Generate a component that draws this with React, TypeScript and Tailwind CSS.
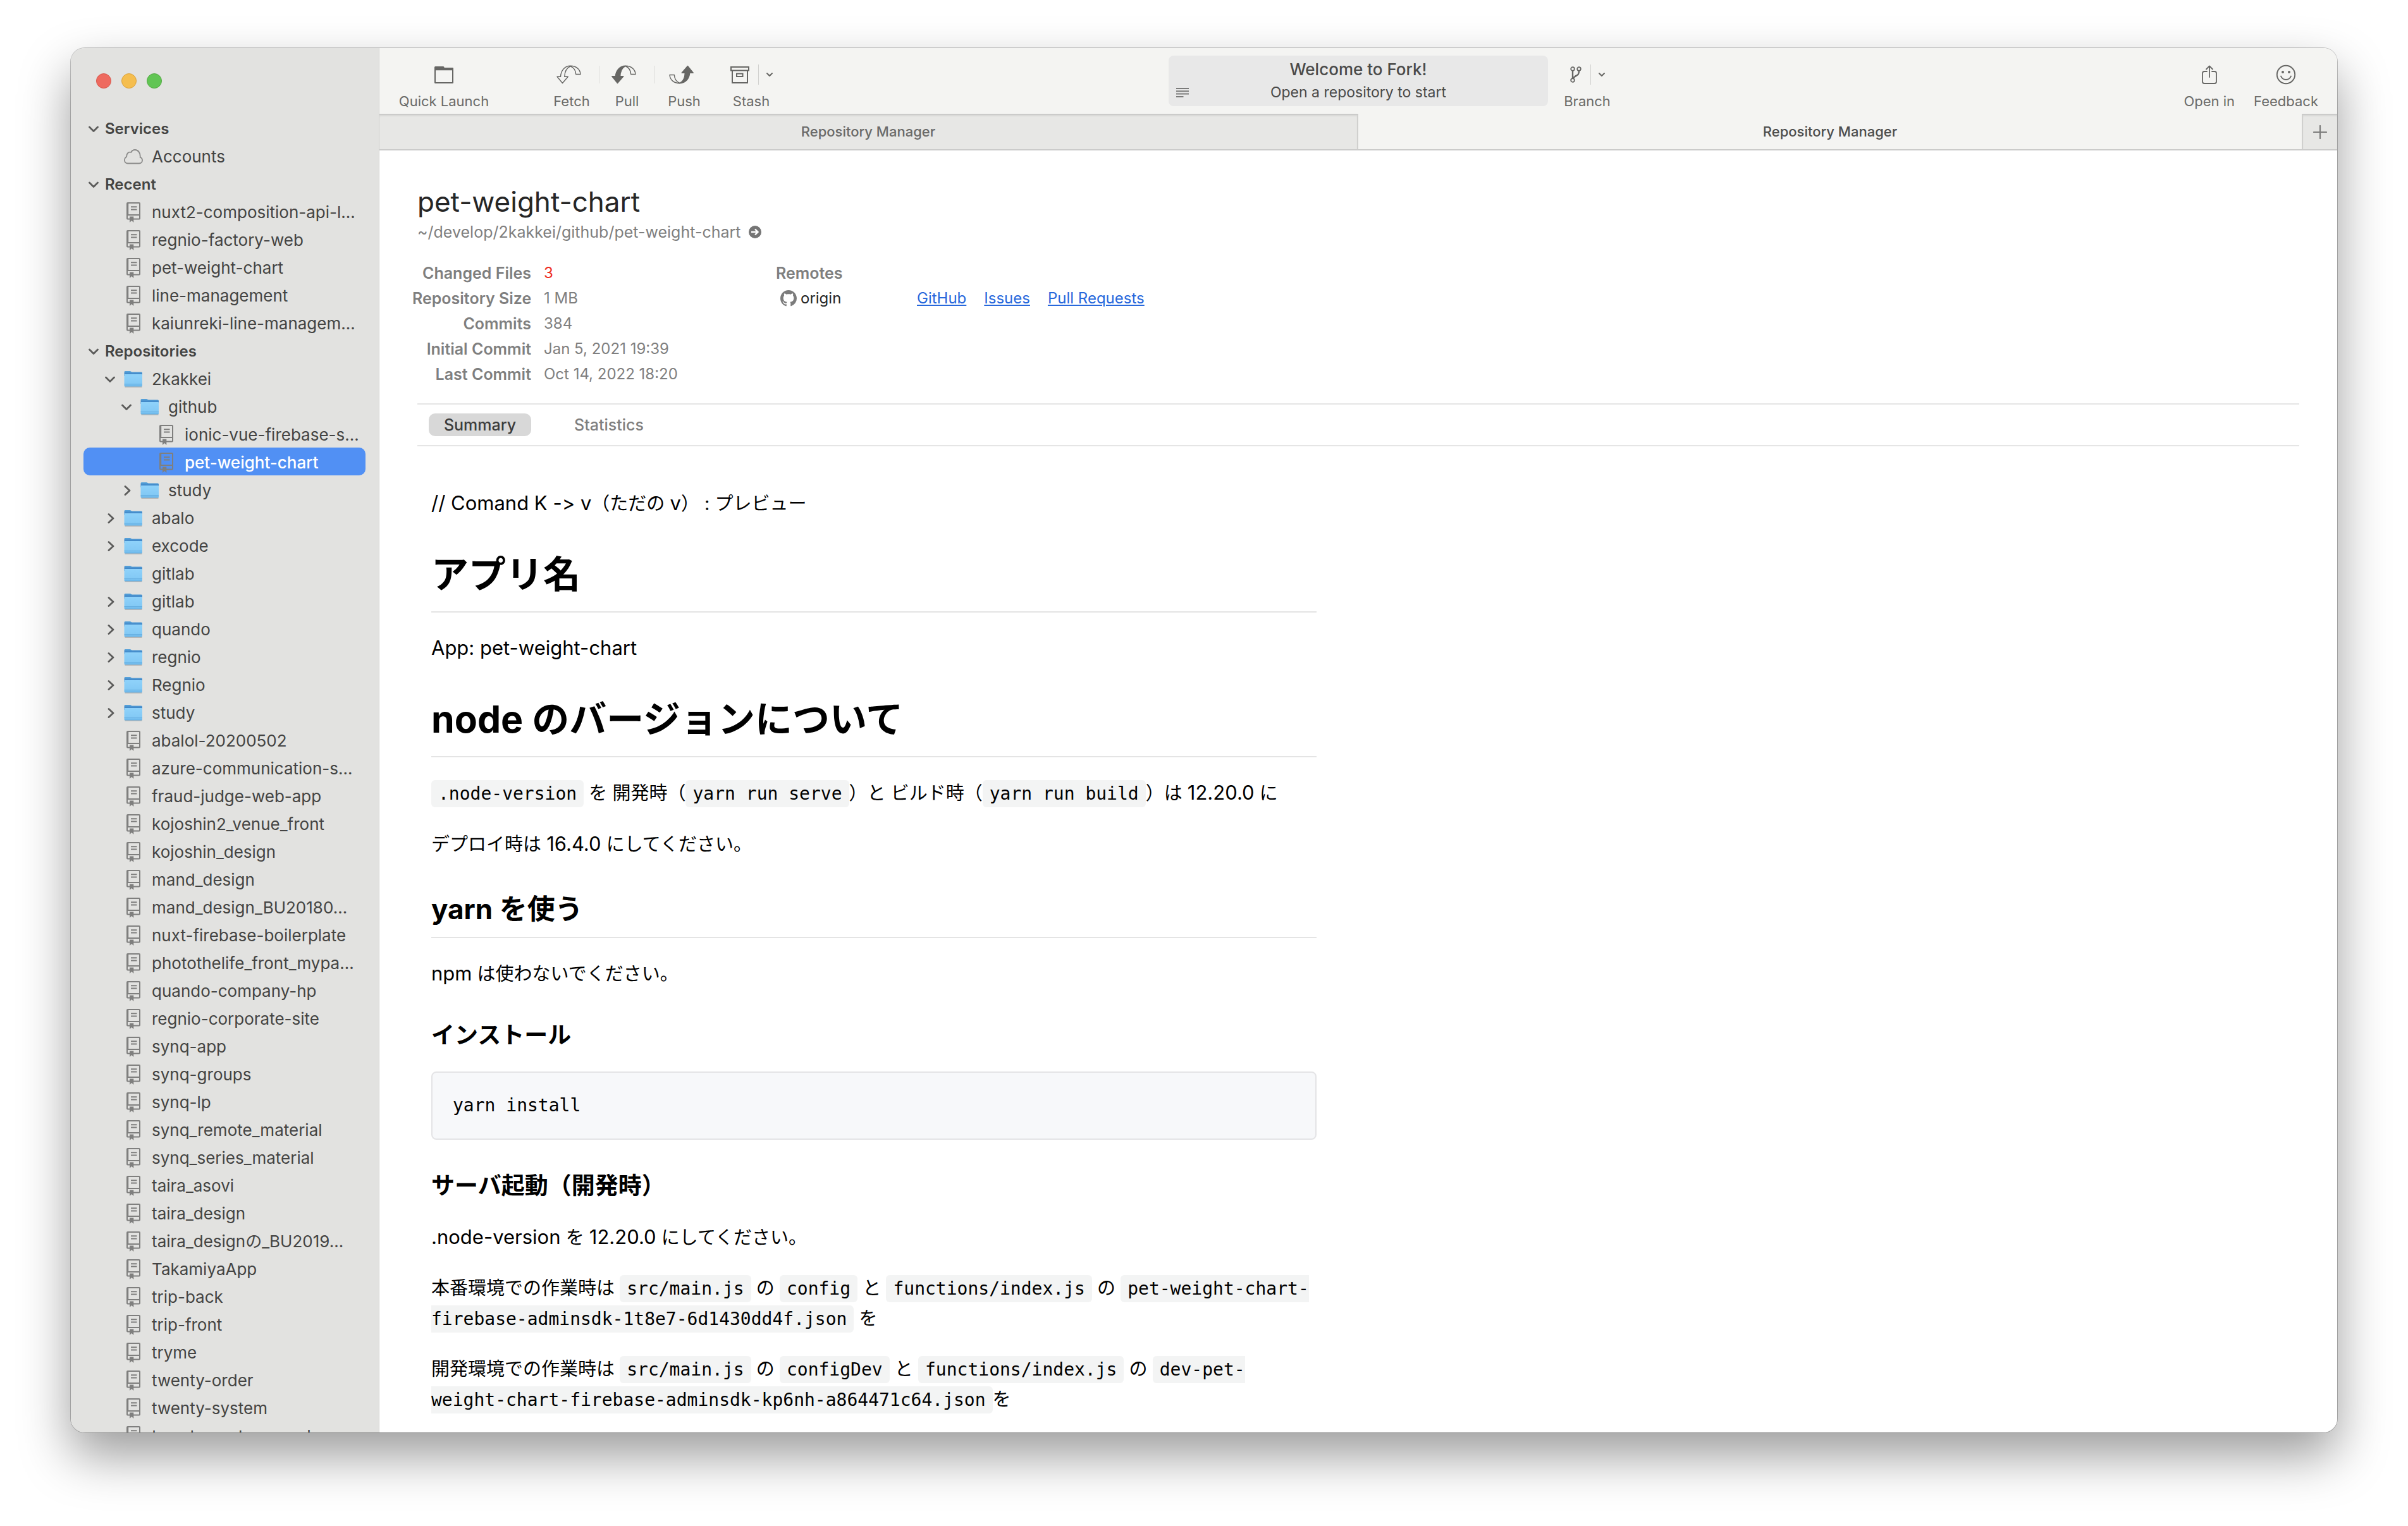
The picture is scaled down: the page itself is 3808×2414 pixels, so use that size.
import { ReactNode } from 'react';
import clsx from 'clsx';

type RowKind = 'section' | 'cloud' | 'folder' | 'repo';

interface Row {
    label: string;
    kind: RowKind;
    level: number;
    open?: boolean;
    selected?: boolean;
}

const section = (label: string): Row => ({ label, kind: 'section', level: 0, open: true });
const folder = (label: string, level = 1, open?: boolean): Row => ({ label, kind: 'folder', level, open });
const repo = (label: string, level = 1, selected = false): Row => ({ label, kind: 'repo', level, selected });

const rows: Row[] = [
    section('Services'),
    { label: 'Accounts', kind: 'cloud', level: 1 },
    section('Recent'),
    repo('nuxt2-composition-api-l…'),
    repo('regnio-factory-web'),
    repo('pet-weight-chart'),
    repo('line-management'),
    repo('kaiunreki-line-managem…'),
    section('Repositories'),
    folder('2kakkei', 1, true),
    folder('github', 2, true),
    repo('ionic-vue-firebase-s…', 3),
    repo('pet-weight-chart', 3, true),
    folder('study', 2, false),
    folder('abalo', 1, false),
    folder('excode', 1, false),
    folder('gitlab'),
    folder('gitlab', 1, false),
    folder('quando', 1, false),
    folder('regnio', 1, false),
    folder('Regnio', 1, false),
    folder('study', 1, false),
    repo('abalol-20200502'),
    repo('azure-communication-s…'),
    repo('fraud-judge-web-app'),
    repo('kojoshin2_venue_front'),
    repo('kojoshin_design'),
    repo('mand_design'),
    repo('mand_design_BU20180…'),
    repo('nuxt-firebase-boilerplate'),
    repo('photothelife_front_mypa…'),
    repo('quando-company-hp'),
    repo('regnio-corporate-site'),
    repo('synq-app'),
    repo('synq-groups'),
    repo('synq-lp'),
    repo('synq_remote_material'),
    repo('synq_series_material'),
    repo('taira_asovi'),
    repo('taira_design'),
    repo('taira_designの_BU2019…'),
    repo('TakamiyaApp'),
    repo('trip-back'),
    repo('trip-front'),
    repo('tryme'),
    repo('twenty-order'),
    repo('twenty-system'),
    repo('twenty-system-prod'),
];

const indents = ['pl-2', 'pl-[34px]', 'pl-[60px]', 'pl-[86px]'];

const stats = [
    { label: 'Changed Files', value: '3', alert: true },
    { label: 'Repository Size', value: '1 MB' },
    { label: 'Commits', value: '384' },
    { label: 'Initial Commit', value: 'Jan 5, 2021 19:39' },
    { label: 'Last Commit', value: 'Oct 14, 2022 18:20' },
];

/* ---------- icons ---------- */

const Disclosure = ({ open }: { open: boolean }) => (
    <svg viewBox="0 0 16 16" className="size-4 shrink-0" fill="none" stroke="#5c5c5b" strokeWidth="2.8" strokeLinecap="round" strokeLinejoin="round">
        <path d={open ? 'M1.5 5 8 11.5 14.5 5' : 'M6 1.5 13 8 6 14.5'} />
    </svg>
);

const FolderIcon = () => (
    <svg viewBox="0 0 30 26" className="h-[26px] w-[30px]">
        <defs>
            <linearGradient id="folder-front" x1="0" y1="0" x2="0" y2="1">
                <stop offset="0" stopColor="#8fd2fa" />
                <stop offset="0.75" stopColor="#83c9f5" />
                <stop offset="1" stopColor="#66b2e6" />
            </linearGradient>
            <linearGradient id="folder-back" x1="0" y1="0" x2="0" y2="1">
                <stop offset="0" stopColor="#5aa5dc" />
                <stop offset="1" stopColor="#2d72b8" />
            </linearGradient>
        </defs>
        <path d="M1.5 25h27" stroke="#00000040" strokeWidth="1.5" />
        <path d="M.5 1.5Q.5 0 2 0h7.5q1 0 1.7.8t1.8.8H27.500q1.500 0 1.500 1.500V8H.5z" fill="url(#folder-back)" />
        <path d="M.5 6q0-1 1-1h26.500q1 0 1 1v17q0 1.500-1.500 1.500H2Q.5 24.500.5 23z" fill="url(#folder-front)" />
        <path d="M.5 20.500H29" stroke="#5fa9dc" strokeWidth="0.8" />
    </svg>
);

const RepoIcon = () => (
    <svg viewBox="0 0 22 32" className="h-8 w-[22px]" fill="none" stroke="#7f7f7e" strokeWidth="2">
        <rect x="1" y="1" width="20" height="25.5" rx="1" />
        <path d="M2.2 1v19M1 20h20M7 7.2h9.5M7 11.5h9.5" />
        <path d="M5 22.5h6.300V32L8.100 29 5 32z" fill="#7f7f7e" stroke="none" />
    </svg>
);

const CloudIcon = () => (
    <svg viewBox="0 0 30 24" className="h-6 w-[30px]" fill="none" stroke="#8b8b8a" strokeWidth="1.8">
        <path d="M6 22.5h18c3 0 5-2.2 5-4.9 0-2.3-1.3-4.1-3.3-4.7C26.3 6 22.5 1 17.5 1c-3 0-5 1.300-6.300 4C7.500 3.800 4 6.500 4.200 11.800 2.200 13 1 15 1 17.500c0 2.900 2.100 5 5 5z" />
    </svg>
);

const GitHubMark = () => (
    <svg viewBox="0 0 16 16" className="size-[26px]" fill="#7c7c7c">
        <path d="M8 0C3.58 0 0 3.58 0 8c0 3.54 2.29 6.53 5.47 7.59.4.07.55-.17.55-.38 0-.19-.01-.82-.01-1.49-2.01.37-2.53-.49-2.69-.94-.09-.23-.48-.94-.82-1.13-.28-.15-.68-.52-.01-.53.63-.01 1.08.58 1.23.82.72 1.21 1.87.87 2.33.66.07-.52.28-.87.51-1.07-1.78-.2-3.64-.89-3.64-3.95 0-.87.31-1.59.82-2.15-.08-.2-.36-1.02.08-2.12 0 0 .67-.21 2.2.82.64-.18 1.32-.27 2-.27.68 0 1.36.09 2 .27 1.53-1.04 2.2-.82 2.2-.82.44 1.1.16 1.92.08 2.12.51.56.82 1.27.82 2.15 0 3.07-1.87 3.75-3.65 3.95.29.25.54.73.54 1.48 0 1.07-.01 1.93-.01 2.2 0 .21.15.46.55.38A8.01 8.01 0 0 0 16 8c0-4.42-3.58-8-8-8z" />
    </svg>
);

const QuickLaunchIcon = () => (
    <svg viewBox="0 0 30 27" className="h-[27px] w-[30px]" fill="#666664">
        <path d="M1.5 0H14q1.3 0 1.7 2h13q1.3 0 1.3 1.3v22.400q0 1.300-1.300 1.300H1.500Q0 27 0 25.500v-24Q0 0 1.500 0zM2 6.300V25h26V6.300z" fillRule="evenodd" />
    </svg>
);

const FetchIcon = () => (
    <svg viewBox="0 0 39 30" className="mr-2.5 h-[30px] w-[39px]" fill="none" stroke="#666664" strokeWidth="1.4" strokeLinejoin="round">
        <path d="M9.5 28.5 1 18.3h5.5C7 8 13.5 1.3 22 1.3 31 1.3 37.5 6.5 38 14.5h-7.300C30.300 8.500 27 3.500 22 1.800 15.800 4.500 13 10.500 12.700 18.300h5.600z" />
    </svg>
);

const PullIcon = ({ className }: { className?: string }) => (
    <svg viewBox="0 0 39 30" className={clsx('mr-2.5 h-[30px] w-[39px]', className)} fill="none" stroke="#666664" strokeWidth="1.4" strokeLinejoin="round">
        <path d="M22 1.3C31 1.3 37.5 6.5 38 14.5h-7.3C30.3 8.5 27 3.5 22 1.5" />
        <path d="M9.5 28.5.8 17.8h5.5C7 8 13.5 1.3 22 1.3 16.5 4.5 13.8 10 13.7 17.8h5.100z" fill="#666664" />
    </svg>
);

const StashIcon = () => (
    <svg viewBox="0 0 30 27" className="h-[27px] w-[30px]" fill="none" stroke="#666664" strokeWidth="2">
        <path d="M1 1h28v5.500H1zM3 6.500V26h24V6.500M10 11.500h9.500v4.500H10z" />
    </svg>
);

const BranchIcon = () => (
    <svg viewBox="0 0 18 26" className="h-[26px] w-[18px]" fill="none" stroke="#666664" strokeWidth="1.8">
        <circle cx="4" cy="4" r="2.8" />
        <circle cx="14" cy="4" r="2.8" />
        <circle cx="4" cy="22" r="2.8" />
        <path d="M4 7v12M14 7c0 7-3 6.5-6.5 9.2Q5 18 4.3 19" strokeWidth="2.4" />
    </svg>
);

const ShareIcon = () => (
    <svg viewBox="0 0 24 30" className="h-[30px] w-6" fill="none" stroke="#666664" strokeWidth="1.8" strokeLinecap="round" strokeLinejoin="round">
        <path d="M8 10H4Q1 10 1 13v13q0 3 3 3h16q3 0 3-3V13q0-3-3-3h-4M12 19V2M7 6.5 12 1.5l5 5" />
    </svg>
);

const SmileIcon = () => (
    <svg viewBox="0 0 32 32" className="size-8" fill="none" stroke="#666664" strokeWidth="1.9" strokeLinecap="round">
        <circle cx="16" cy="16" r="14.2" />
        <path d="M8 18.5C9.5 22 12.5 24 16 24s6.500-2 8-5.500" />
        <circle cx="11" cy="12" r="2" fill="#666664" stroke="none" />
        <circle cx="21" cy="12" r="2" fill="#666664" stroke="none" />
    </svg>
);

const MenuCaret = () => (
    <svg viewBox="0 0 10 8" className="h-2 w-2.5" fill="none" stroke="#666664" strokeWidth="2" strokeLinecap="round" strokeLinejoin="round">
        <path d="M1 2l4 4 4-4" />
    </svg>
);

/* ---------- sidebar ---------- */

const SidebarRow = ({ row }: { row: Row }) => (
    <li>
        <button
            type="button"
            className={clsx(
                'flex h-11 w-full items-center rounded-[10px] pt-[3px] text-left whitespace-nowrap',
                indents[row.level],
                row.kind === 'section' ? 'text-[24px] font-semibold' : 'text-[26px]',
                row.selected ? 'bg-[#5190f4] font-medium text-white' : 'text-[#444443]',
            )}
        >
            {row.open === undefined ? <span className="w-4 shrink-0" /> : <Disclosure open={row.open} />}
            {row.kind === 'section' ? (
                <span className="pl-2.5">{row.label}</span>
            ) : (
                <>
                    <span className="mr-3.5 ml-3.5 flex w-[30px] shrink-0 justify-center">
                        {row.kind === 'folder' && <FolderIcon />}
                        {row.kind === 'repo' && <RepoIcon />}
                        {row.kind === 'cloud' && <CloudIcon />}
                    </span>
                    {row.label}
                </>
            )}
        </button>
    </li>
);

const Sidebar = () => (
    <aside className="flex w-[488px] shrink-0 flex-col overflow-hidden border-r border-[#d3d3d1] bg-[#e2e2e0]">
        <div className="flex h-[104px] shrink-0 items-center gap-4 pl-10">
            <button type="button" aria-label="Close" className="size-6 rounded-full border border-[#d8574b] bg-[#ee6a5f]" />
            <button type="button" aria-label="Minimize" className="size-6 rounded-full border border-[#dba23c] bg-[#f5be4f]" />
            <button type="button" aria-label="Zoom" className="size-6 rounded-full border border-[#52a842] bg-[#61c554]" />
        </div>
        <ul className="min-h-0 flex-1 overflow-hidden pr-[21px] pl-5">
            {rows.map((row, i) => <SidebarRow key={i} row={row} />)}
        </ul>
    </aside>
);

/* ---------- toolbar ---------- */

interface ToolProps {
    label: string;
    className?: string;
    menu?: boolean;
    children: ReactNode;
}

const Tool = ({ label, className, menu, children }: ToolProps) => (
    <button type="button" className={clsx('flex flex-col items-center text-[22px] leading-7 text-[#6b6b69]', className)}>
        <span className="mb-3 flex h-8 items-center">
            {children}
            {menu && (
                <>
                    <span className="mr-3 ml-3.5 h-8 w-px bg-[#d2d2d0]" />
                    <MenuCaret />
                </>
            )}
        </span>
        {label}
    </button>
);

const ToolDivider = () => <span className="mt-0.5 h-7 w-px bg-[#dededc]" />;

const Toolbar = () => (
    <header className="grid h-[104px] shrink-0 grid-cols-[1fr_600px_1fr] bg-[#f4f4f2]">
        <div className="flex items-start pt-[26px]">
            <Tool label="Quick Launch" className="mr-[57px] w-[204px]"><QuickLaunchIcon /></Tool>
            <Tool label="Fetch" className="w-[86px]"><FetchIcon /></Tool>
            <ToolDivider />
            <Tool label="Pull" className="w-[87px]"><PullIcon /></Tool>
            <ToolDivider />
            <Tool label="Push" className="w-[92px]"><PullIcon className="rotate-180" /></Tool>
            <Tool label="Stash" menu className="ml-5 w-20"><StashIcon /></Tool>
        </div>
        <div className="mt-3 flex h-20 items-end rounded-lg bg-[#e8e8e8] pb-3.5 pl-3">
            <svg viewBox="0 0 20 15" className="h-[15px] w-5 shrink-0" stroke="#7b7b7a" strokeWidth="2">
                <path d="M0 1h20M0 5.3h20M0 9.6h20M0 14h11.5" />
            </svg>
            <div className="-mb-2.5 flex-1 pr-8 text-center text-[#4a4a49]">
                <p className="text-[26px] leading-9 font-medium">Welcome to Fork!</p>
                <p className="text-[23px] leading-9">Open a repository to start</p>
            </div>
        </div>
        <div className="flex items-start justify-between pt-[26px] pr-[30px] pl-[26px]">
            <Tool label="Branch" menu className="w-[72px]"><BranchIcon /></Tool>
            <div className="flex gap-[30px]">
                <Tool label="Open in"><ShareIcon /></Tool>
                <Tool label="Feedback"><SmileIcon /></Tool>
            </div>
        </div>
    </header>
);

const TabStrip = () => (
    <nav className="flex h-[58px] shrink-0 border-b-2 border-[#cbcbca] bg-[#f4f4f2] text-[22px] font-medium">
        <button type="button" className="w-1/2 border-t border-r-2 border-t-[#bdbdbc] border-r-[#d0d0ce] bg-[#e7e7e5] text-[#6a6a69] shadow-[inset_0_3px_3px_-1px_#00000018]">Repository Manager</button>
        <button type="button" className="flex-1 text-[#4d4d4c]">Repository Manager</button>
        <button type="button" aria-label="New tab" className="flex w-14 items-center justify-center border-t border-l-2 border-t-[#bdbdbc] border-l-[#d0d0ce] bg-[#e7e7e5] shadow-[inset_0_3px_3px_-1px_#00000018]">
            <svg viewBox="0 0 22 22" className="size-[22px]" stroke="#7d7d7c" strokeWidth="2.2" strokeLinecap="round">
                <path d="M11 1v20M1 11h20" />
            </svg>
        </button>
    </nav>
);

/* ---------- repository details ---------- */

const RemoteLink = ({ children }: { children: ReactNode }) => (
    <a href="#" className="text-[#2768dc] underline decoration-2 underline-offset-2">{children}</a>
);

const RepoHeader = () => (
    <div className="px-15 pt-[53px]">
        <h1 className="text-[44px] leading-14 text-[#262626]">pet-weight-chart</h1>
        <p className="mt-1 flex items-center gap-3 text-[25px] leading-8 text-[#7f7f7f]">
            ~/develop/2kakkei/github/pet-weight-chart
            <svg viewBox="0 0 20 20" className="size-5">
                <circle cx="10" cy="10" r="10" fill="#757575" />
                <path d="M4 10h10M10 5.5l4.5 4.5-4.5 4.5" fill="none" stroke="#fff" strokeWidth="2.4" />
            </svg>
        </p>
        <div className="mt-[29px] flex text-[24px] leading-10 text-[#7f7f7f]">
            <dl className="-ml-2 w-[575px]">
                {stats.map((s) => (
                    <div key={s.label} className="flex gap-5">
                        <dt className="w-[188px] text-right text-[25px] font-semibold whitespace-nowrap">{s.label}</dt>
                        <dd className={clsx(s.alert && 'text-[#ee2b1f]')}>{s.value}</dd>
                    </div>
                ))}
            </dl>
            <section>
                <h2 className="text-[25px] font-semibold">Remotes</h2>
                <div className="flex items-center">
                    <span className="flex w-[223px] items-center gap-1.5 pl-[7px] text-[#262626]"><GitHubMark />origin</span>
                    <span className="flex gap-7">
                        <RemoteLink>GitHub</RemoteLink>
                        <RemoteLink>Issues</RemoteLink>
                        <RemoteLink>Pull Requests</RemoteLink>
                    </span>
                </div>
            </section>
        </div>
        <div className="mt-[26px] flex h-[68px] items-center border-y-2 border-[#e5e5e5] text-[25px] font-medium">
            <button type="button" className="ml-[18px] h-9 w-[162px] rounded-[10px] bg-[#d8d8d8] leading-9 text-[#3c3c3c]">Summary</button>
            <button type="button" className="ml-[42px] h-9 w-[162px] leading-9 text-[#7f7f7f]">Statistics</button>
        </div>
    </div>
);

/* ---------- readme ---------- */

const En = ({ children }: { children: ReactNode }) => <span className="text-[31px]">{children}</span>;

const P = ({ children }: { children: ReactNode }) => <p className="mb-8 leading-[48px]">{children}</p>;

const Code = ({ children }: { children: ReactNode }) => (
    <code className="rounded-md bg-[#f3f4f4] px-[11px] py-[5px] font-['DejaVu_Sans_Mono',monospace] text-[28px] leading-none">{children}</code>
);

const H1 = ({ children }: { children: ReactNode }) => (
    <h1 className="mt-12 mb-8 border-b-2 border-[#e4e4e4] pb-[18px] text-[59px] leading-[80px] font-bold">{children}</h1>
);

const H2 = ({ children }: { children: ReactNode }) => (
    <h2 className="mt-12 mb-8 border-b-2 border-[#e4e4e4] pb-[13px] text-[44px] leading-[61px] font-bold">{children}</h2>
);

const H3 = ({ children }: { children: ReactNode }) => (
    <h3 className="mt-12 mb-8 text-[37px] leading-[50px] font-bold">{children}</h3>
);

const Readme = () => (
    <article lang="ja" className="ml-[82px] w-[1400px] pt-[66px] text-[29px] text-black [font-variant-ligatures:no-contextual]">
        <P><En>// Comand K -&gt; v</En>（ただの <En>v</En>） : プレビュー</P>
        <H1>アプリ名</H1>
        <P><En>App: pet-weight-chart</En></P>
        <H1>node のバージョンについて</H1>
        <P>
            <Code>.node-version</Code> を 開発時（<Code>yarn run serve</Code>）と ビルド時（<Code>yarn run build</Code>）は <En>12.20.0</En> に
        </P>
        <P>デプロイ時は <En>16.4.0</En> にしてください。</P>
        <H2>yarn を使う</H2>
        <P><En>npm</En> は使わないでください。</P>
        <H3>インストール</H3>
        <pre className="flex h-[108px] items-center rounded-lg border-2 border-[#e4e4e6] bg-[#f7f8fa] px-8 font-['DejaVu_Sans_Mono',monospace] text-[28px]">yarn install</pre>
        <H3>サーバ起動（開発時）</H3>
        <P><En>.node-version</En> を <En>12.20.0</En> にしてください。</P>
        <P>
            本番環境での作業時は <Code>src/main.js</Code> の <Code>config</Code> と <Code>functions/index.js</Code> の <Code>pet-weight-chart-firebase-adminsdk-1t8e7-6d1430dd4f.json</Code> を
        </P>
        <P>
            開発環境での作業時は <Code>src/main.js</Code> の <Code>configDev</Code> と <Code>functions/index.js</Code> の <Code>dev-pet-weight-chart-firebase-adminsdk-kp6nh-a864471c64.json</Code>を
        </P>
    </article>
);

export default function App() {
    return (
        <div className="h-screen overflow-hidden bg-white px-28 pt-19 pb-37 font-['Inter','Noto_Sans_CJK_JP',sans-serif]">
            <div className="flex h-full overflow-hidden rounded-[22px] shadow-[0_0_0_1px_#00000038,0_37px_80px_#00000064]">
                <Sidebar />
                <main className="flex min-w-0 flex-1 flex-col overflow-hidden bg-white">
                    <Toolbar />
                    <TabStrip />
                    <div className="min-h-0 flex-1 overflow-hidden">
                        <RepoHeader />
                        <Readme />
                    </div>
                </main>
            </div>
        </div>
    );
}
